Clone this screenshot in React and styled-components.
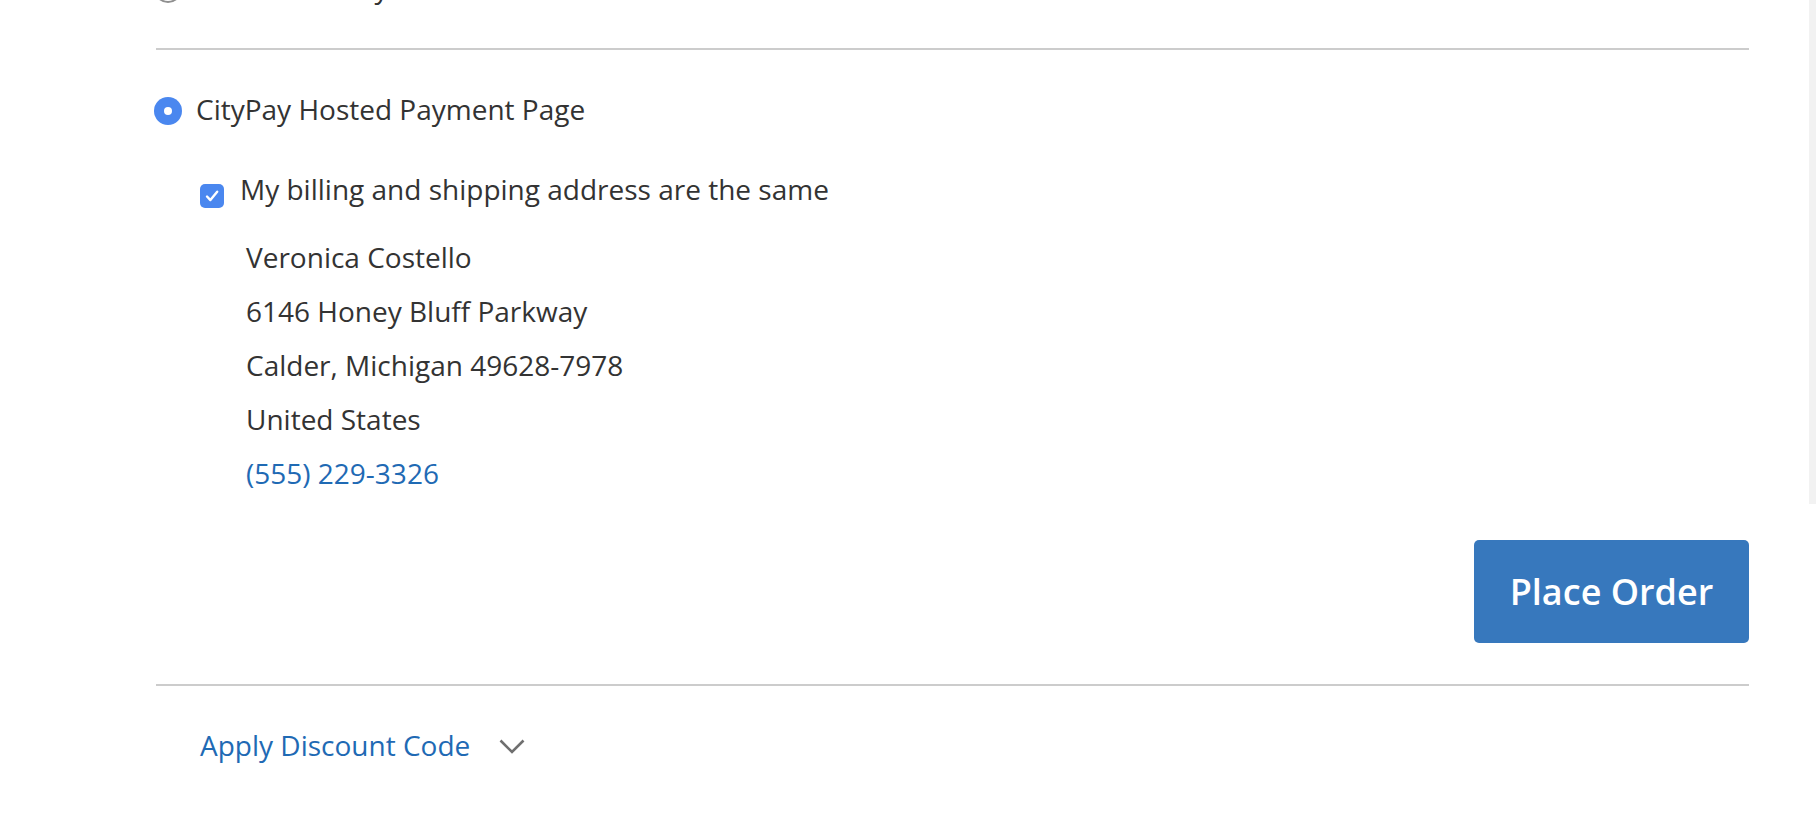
import React from "react";
import styled, { createGlobalStyle } from "styled-components";

const GlobalStyle = createGlobalStyle`
  html, body {
    margin: 0;
    padding: 0;
    background: #ffffff;
    overflow: hidden;
  }
  body {
    font-family: "Open Sans", "Liberation Sans", Arial, sans-serif;
    color: #333333;
  }
`;

const Page = styled.div`
  position: relative;
  height: 834px;
  overflow: hidden;
`;

const Checkout = styled.div`
  width: 1593px;
  margin-left: 156px;
  margin-top: -33px;
`;

const Method = styled.div`
  padding: ${(p) => (p.$first ? "0 0 41px" : "39px 0 0")};
  border-bottom: ${(p) => (p.$first ? "2px solid #cccccc" : "none")};
`;

const MethodTitle = styled.label`
  display: flex;
  align-items: flex-start;
  font-size: 28px;
  line-height: 40px;
  color: #333333;
  cursor: pointer;
`;

const Radio = styled.span`
  flex: none;
  box-sizing: border-box;
  width: 28px;
  height: 28px;
  margin: 8px 14px 0 -2px;
  border-radius: 50%;
  display: flex;
  align-items: center;
  justify-content: center;
  background: ${(p) => (p.$checked ? "#4a87ef" : "#ffffff")};
  border: ${(p) => (p.$checked ? "none" : "2px solid #8f8f8f")};

  &::after {
    content: "";
    display: ${(p) => (p.$checked ? "block" : "none")};
    width: 8px;
    height: 8px;
    border-radius: 50%;
    background: #ffffff;
  }
`;

const MethodContent = styled.div`
  padding-left: 44px;
`;

const CheckRow = styled.label`
  display: flex;
  align-items: flex-start;
  margin-top: 40px;
  font-size: 28px;
  line-height: 40px;
  color: #333333;
`;

const CheckBox = styled.span`
  flex: none;
  width: 24px;
  height: 24px;
  margin: 15px 16px 0 0;
  border-radius: 5px;
  background: #4a87ef;
  display: flex;
  align-items: center;
  justify-content: center;

  svg {
    display: block;
    width: 18px;
    height: 18px;
  }
`;

const Address = styled.div`
  margin-top: 21px;
  padding-left: 46px;
  font-size: 28px;
  line-height: 54px;
  color: #333333;
`;

const AddressLine = styled.div``;

const Phone = styled.a`
  color: #1f6ab4;
  text-decoration: none;
`;

const Actions = styled.div`
  display: flex;
  justify-content: flex-end;
  margin-top: 40px;
  padding-bottom: 41px;
  border-bottom: 2px solid #cccccc;
  margin-left: -44px;
`;

const PlaceOrder = styled.button`
  width: 275px;
  height: 103px;
  border: none;
  border-radius: 5px;
  background: #3778bd;
  color: #ffffff;
  font-family: "Open Sans", "Liberation Sans", Arial, sans-serif;
  font-size: 36px;
  font-weight: 600;
  cursor: pointer;
`;

const Discount = styled.div`
  display: flex;
  align-items: center;
  gap: 29px;
  margin-top: 39px;
  padding-left: 44px;
  font-size: 28px;
  line-height: 40px;
  color: #1f6ab4;
`;

const Chevron = styled.svg`
  width: 26px;
  height: 15px;
  margin-top: 2px;
`;

const ScrollTrack = styled.div`
  position: absolute;
  top: 0;
  right: 0;
  width: 7px;
  height: 504px;
  background: #f2f2f2;
`;

const address = [
  "Veronica Costello",
  "6146 Honey Bluff Parkway",
  "Calder, Michigan 49628-7978",
  "United States",
];

const App = () => {
  return (
    <Page>
      <GlobalStyle />
      <Checkout>
        <Method $first>
          <MethodTitle>
            <Radio />
            Check / Money order
          </MethodTitle>
        </Method>

        <Method>
          <MethodTitle>
            <Radio $checked />
            CityPay Hosted Payment Page
          </MethodTitle>

          <MethodContent>
            <CheckRow>
              <CheckBox>
                <svg viewBox="0 0 18 18">
                  <path
                    d="M4 9.5l3.4 3.6L14.2 4.8"
                    fill="none"
                    stroke="#ffffff"
                    strokeWidth="2.4"
                    strokeLinecap="round"
                    strokeLinejoin="round"
                  />
                </svg>
              </CheckBox>
              My billing and shipping address are the same
            </CheckRow>

            <Address>
              {address.map((line) => (
                <AddressLine key={line}>{line}</AddressLine>
              ))}
              <AddressLine>
                <Phone href="#">(555) 229-3326</Phone>
              </AddressLine>
            </Address>

            <Actions>
              <PlaceOrder>Place Order</PlaceOrder>
            </Actions>
          </MethodContent>
        </Method>

        <Discount>
          Apply Discount Code
          <Chevron viewBox="0 0 26 15">
            <path
              d="M1.5 1.5L13 13L24.5 1.5"
              fill="none"
              stroke="#6f6f6f"
              strokeWidth="2.6"
            />
          </Chevron>
        </Discount>
      </Checkout>
      <ScrollTrack />
    </Page>
  );
};

export default App;
